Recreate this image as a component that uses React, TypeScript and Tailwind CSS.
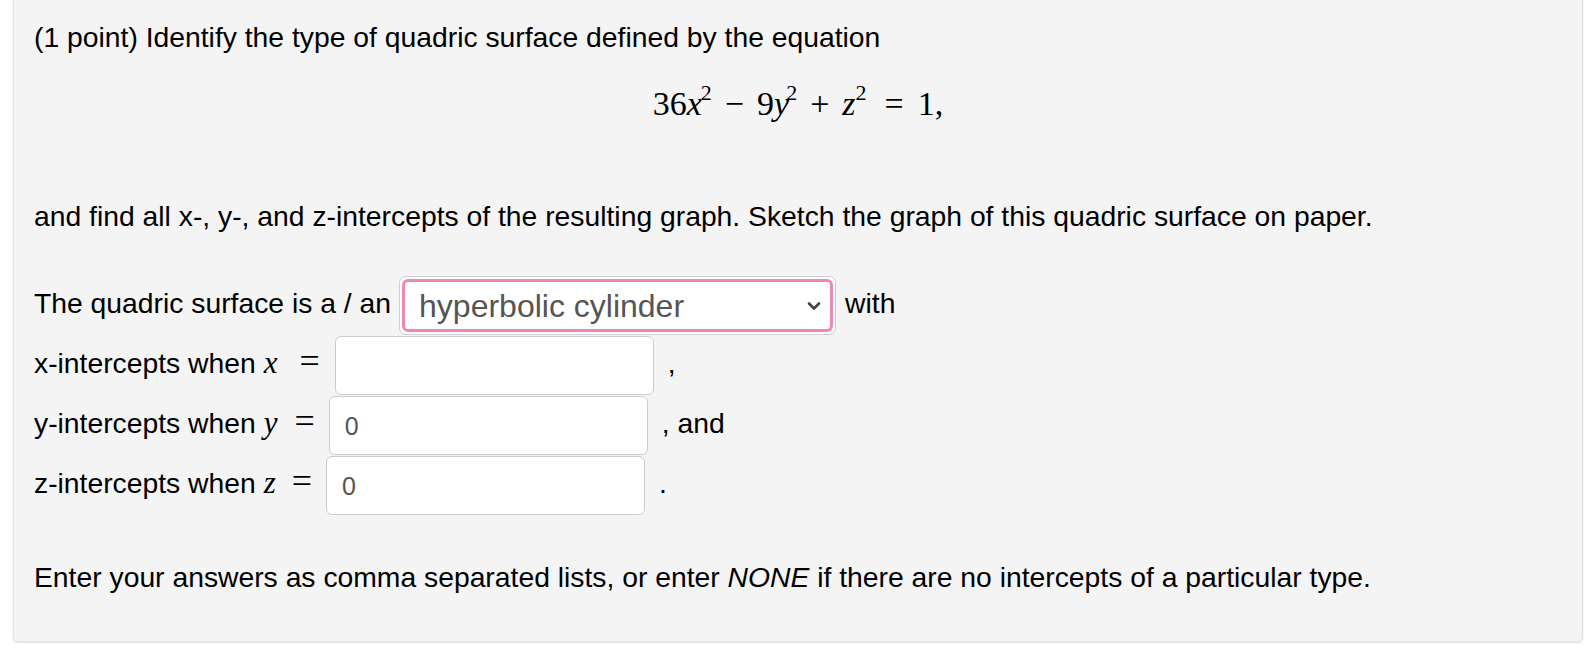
import React from "react";

const sans = { fontFamily: '"Liberation Sans", Arial, Helvetica, sans-serif' };
const serif = { fontFamily: '"Liberation Serif", "Times New Roman", serif' };

function Chevron() {
  return (
    <svg width="14" height="10" viewBox="0 0 14 10" className="shrink-0">
      <path d="M2 2.5 L7 7.5 L12 2.5" fill="none" stroke="#444" strokeWidth="2.6" strokeLinecap="round" strokeLinejoin="round" />
    </svg>
  );
}

function MathEq({ c, gap }: { c: string; gap: string }) {
  return (
    <span className="text-[31px]" style={serif}>
      <span className="italic">{c}</span>
      <span className={gap + " text-[36px]"}>=</span>
    </span>
  );
}

function Input({ value }: { value?: string }) {
  return (
    <div className="w-[319px] h-[59px] bg-white border border-[#cccccc] rounded-[6px] flex items-center pl-[15px] text-[25px] text-[#555]">
      {value ?? ""}
    </div>
  );
}

export default function App() {
  return (
    <div className="w-[1590px] h-[652px] bg-white text-black" style={sans}>
      <div className="ml-[13px] w-[1570px] bg-[#f4f4f4] border-x border-b border-[#e2e2e2] rounded-b-[5px] shadow-[0_1px_2px_rgba(0,0,0,0.12)] pl-[20px] pt-[23px] pb-[50px] text-[28.3px] leading-[28px]">
        <p>(1 point) Identify the type of quadric surface defined by the equation</p>

        <div className="mt-[33px] h-[40px] flex items-center justify-center text-[34px] leading-[40px] pr-[20px]" style={serif}>
          <span>36</span>
          <span className="italic">x</span>
          <sup className="text-[22px] -ml-[1px]">2</sup>
          <span className="mx-[13px]">−</span>
          <span>9</span>
          <span className="italic">y</span>
          <sup className="text-[22px] -ml-[3px]">2</sup>
          <span className="mx-[13px]">+</span>
          <span className="italic">z</span>
          <sup className="text-[22px]">2</sup>
          <span className="ml-[18px] mr-[14px]">=</span>
          <span>1,</span>
        </div>

        <p className="mt-[78px]">
          and find all x-, y-, and z-intercepts of the resulting graph. Sketch the graph of this quadric surface on paper.
        </p>

        <div className="mt-[46px] flex items-center">
          <span className="pb-[6px]">The quadric surface is a / an</span>
          <div className="ml-[8px] w-[437px] h-[59px] bg-white border border-[#cfcfcf] rounded-[7px] p-[2px]">
            <div className="h-full border-[3px] border-[#ee86b6] rounded-[6px] flex items-center justify-between pl-[14px] pr-[9px]">
              <span className="text-[32px] text-[#555]">hyperbolic cylinder</span>
              <Chevron />
            </div>
          </div>
          <span className="ml-[9px] pb-[6px]">with</span>
        </div>

        <div className="mt-[1px] flex items-center">
          <span className="pb-[7px] whitespace-pre">
            x-intercepts when <MathEq c="x" gap="ml-[22px]" />
          </span>
          <div className="ml-[15px]">
            <Input />
          </div>
          <span className="ml-[14px] pb-[5px]">,</span>
        </div>

        <div className="mt-[1px] flex items-center">
          <span className="pb-[7px] whitespace-pre">
            y-intercepts when <MathEq c="y" gap="ml-[17px]" />
          </span>
          <div className="ml-[14px]">
            <Input value="0" />
          </div>
          <span className="ml-[14px] pb-[5px]">, and</span>
        </div>

        <div className="mt-[1px] flex items-center">
          <span className="pb-[7px] whitespace-pre">
            z-intercepts when <MathEq c="z" gap="ml-[16px]" />
          </span>
          <div className="ml-[14px]">
            <Input value="0" />
          </div>
          <span className="ml-[14px] pb-[5px]">.</span>
        </div>

        <p className="mt-[48px]">
          Enter your answers as comma separated lists, or enter <span className="italic">NONE</span> if there are no intercepts of a particular type.
        </p>
      </div>
    </div>
  );
}
